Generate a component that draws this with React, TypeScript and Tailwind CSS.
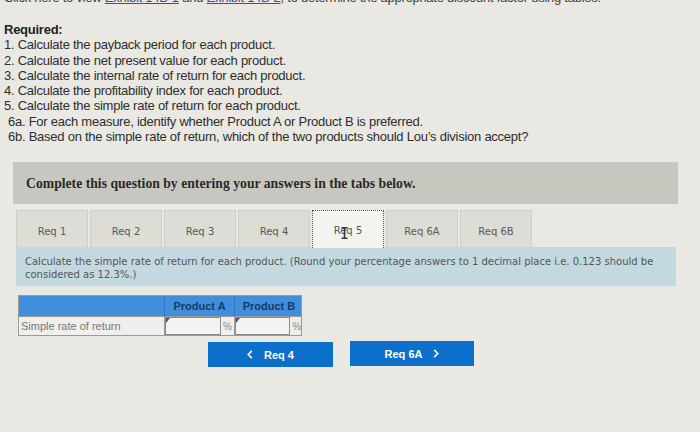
import React from 'react';

const tabs = ['Req 1', 'Req 2', 'Req 3', 'Req 4', 'Req 5', 'Req 6A', 'Req 6B'];

const requirements = [
  '1. Calculate the payback period for each product.',
  '2. Calculate the net present value for each product.',
  '3. Calculate the internal rate of return for each product.',
  '4. Calculate the profitability index for each product.',
  '5. Calculate the simple rate of return for each product.',
  '6a. For each measure, identify whether Product A or Product B is preferred.',
  '6b. Based on the simple rate of return, which of the two products should Lou\u2019s division accept?',
];

const PercentInput: React.FC = () => (
  <div className="flex items-center h-full">
    <div className="relative w-[56px] h-[18px] bg-[#f3f3f1] border border-[#8a8a8a]">
      <div className="absolute left-0 top-0 w-0 h-0 border-t-[5px] border-t-[#2a5aa8] border-r-[4px] border-r-transparent" />
    </div>
    <span className="w-[13px] text-center text-[10px] text-[#8a8a8a] font-['Liberation_Sans',sans-serif]">%</span>
  </div>
);

const Chevron: React.FC<{ dir: 'left' | 'right' }> = ({ dir }) => (
  <svg width="6" height="9" viewBox="0 0 6 9">
    <path
      d={dir === 'left' ? 'M4.8 0.8L1.3 4.5l3.5 3.7' : 'M1.2 0.8l3.5 3.7-3.5 3.7'}
      stroke="#fff"
      strokeWidth="1.7"
      fill="none"
    />
  </svg>
);

const Tab: React.FC<{ label: string; active: boolean }> = ({ label, active }) => {
  if (active) {
    return (
      <div className="relative w-[72px] h-[38px] -mb-[1px] bg-[#f3f3f0] border border-dotted border-[#555] border-b-0 flex items-center justify-center pt-[2px] text-[10px] text-[#555] font-['DejaVu_Sans',sans-serif]">
        {label}
        <svg className="absolute left-[28px] top-[16px]" width="7" height="12" viewBox="0 0 7 12">
          <path d="M0.5 0.8h6M0.5 11.2h6M3.5 0.8v10.4" stroke="#2f3b4a" strokeWidth="1.6" fill="none" />
        </svg>
      </div>
    );
  }
  return (
    <div className="w-[72px] h-[37px] bg-[#dddcd5] border border-[#cfcdc6] border-b-0 flex items-center justify-center pt-[4px] text-[10px] text-[#5a5a5a] font-['DejaVu_Sans',sans-serif]">
      {label}
    </div>
  );
};

export default function App() {
  return (
    <div className="w-[700px] h-[432px] overflow-hidden bg-[#e9e8e3] text-[#2e2e2e]">
      {/* cut-off line at the very top */}
      <div className="h-[5px] overflow-hidden pl-[4px]">
        <div className="-mt-[10px] text-[13px] leading-[15px] tracking-[-0.25px] whitespace-nowrap text-[#444] font-['Liberation_Sans',sans-serif]">
          Click here to view <span className="text-[#3b4fa0] underline">Exhibit 14B-1</span> and{' '}
          <span className="text-[#3b4fa0] underline">Exhibit 14B-2</span>, to determine the appropriate discount factor using tables.
        </div>
      </div>

      <div className="mt-[17px] pl-[4px] text-[13px] leading-[15.3px] tracking-[-0.25px] font-['Liberation_Sans',sans-serif]">
        <div className="font-bold text-[#222]">Required:</div>
        {requirements.map((r, i) => (
          <div key={i} className={i >= 5 ? 'pl-[4px]' : ''}>
            {r}
          </div>
        ))}
      </div>

      <div className="mt-[18px] ml-[13px] w-[665px] h-[42px] bg-[#c8c7bf] flex items-center pl-[13px] pt-[2px]">
        <span className="text-[13.7px] font-bold text-[#2a2a2a] font-['Liberation_Serif',serif]">
          Complete this question by entering your answers in the tabs below.
        </span>
      </div>

      <div className="mt-[6px] ml-[16px] flex items-end gap-[2px]">
        {tabs.map((t) => (
          <Tab key={t} label={t} active={t === 'Req 5'} />
        ))}
      </div>

      <div className="ml-[16px] w-[660px] h-[39px] bg-[#c4d8df] pl-[9px] pt-[8px] text-[10px] leading-[13px] text-[#555] font-['DejaVu_Sans',sans-serif]">
        Calculate the simple rate of return for each product. (Round your percentage answers to 1 decimal place i.e. 0.123 should be considered as 12.3%.)
      </div>

      <div className="mt-[9px] ml-[18px] w-[284px] border border-[#9a9a9a] font-['Liberation_Sans',sans-serif]">
        <div className="grid grid-cols-[145px_70px_69px] h-[20px] bg-[#3f8fdc] text-[11px] font-bold text-[#173a6b]">
          <div />
          <div className="flex items-center justify-center border-l border-[#2f78c0]">Product A</div>
          <div className="flex items-center justify-center border-l border-[#2f78c0]">Product B</div>
        </div>
        <div className="grid grid-cols-[145px_70px_69px] h-[19px] bg-[#efefed] border-t border-[#9a9a9a] text-[11px] text-[#777]">
          <div className="flex items-center pl-[2px]">Simple rate of return</div>
          <div className="border-l border-[#9a9a9a]">
            <PercentInput />
          </div>
          <div className="border-l border-[#9a9a9a]">
            <PercentInput />
          </div>
        </div>
      </div>

      <div className="mt-[5px] ml-[208px] flex items-start gap-[17px] font-['Liberation_Sans',sans-serif]">
        <button className="w-[125px] h-[25px] mt-[1px] bg-[#0b6fcc] text-white text-[11px] font-bold flex items-center justify-center gap-[11px]">
          <Chevron dir="left" />
          <span>Req 4</span>
        </button>
        <button className="w-[124px] h-[25px] bg-[#0b6fcc] text-white text-[11px] font-bold flex items-center justify-center gap-[11px]">
          <span>Req 6A</span>
          <Chevron dir="right" />
        </button>
      </div>
    </div>
  );
}
